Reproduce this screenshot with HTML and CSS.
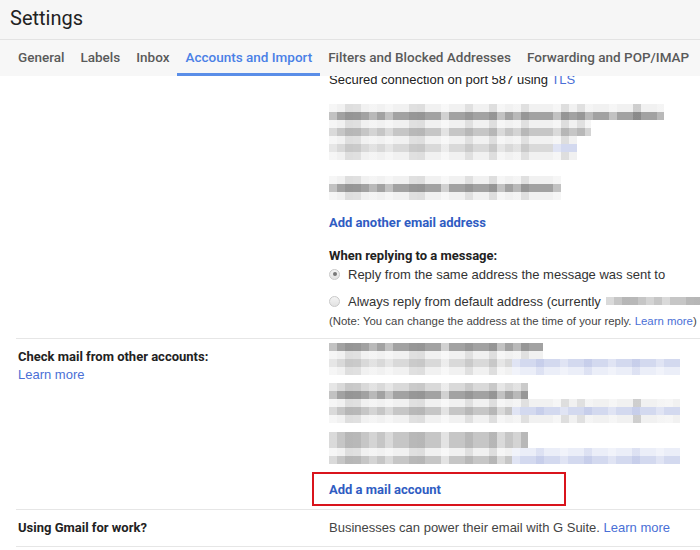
FILE: index.html
```html
<!DOCTYPE html>
<html lang="en">
<head>
  <meta charset="UTF-8">
  <title>Settings</title>
  <link rel="stylesheet" href="styles.css">
</head>
<body>

  <header class="top">
    <h1>Settings</h1>
  </header>

  <nav class="tabs">
    <a class="tab">General</a>
    <a class="tab">Labels</a>
    <a class="tab">Inbox</a>
    <a class="tab active">Accounts and Import</a>
    <a class="tab">Filters and Blocked Addresses</a>
    <a class="tab">Forwarding and POP/IMAP</a>
  </nav>

  <main class="content">

    <!-- send mail as -->
    <section class="row row-first">
      <div class="row-label"></div>
      <div class="row-value">
        <p class="line secured">Secured connection on port 587 using <a class="link">TLS</a></p>

        <div class="mosaic mosaic-a">
          <div class="mos faint w-335"></div>
          <div class="mos dark w-335"></div>
          <div class="mos faint w-262"></div>
          <div class="mos mid w-262"></div>
          <div class="mos faint w-248"></div>
          <div class="mos light w-248"><span class="mos-link short"></span></div>
          <div class="mos faint w-248"></div>
        </div>

        <div class="mosaic mosaic-b">
          <div class="mos faint w-232"></div>
          <div class="mos dark w-232"></div>
          <div class="mos faint w-232"></div>
        </div>

        <p class="line action-line"><a class="action">Add another email address</a></p>

        <div class="reply">
          <div class="reply-title">When replying to a message:</div>
          <div class="radio-row">
            <span class="radio checked"></span>
            <span>Reply from the same address the message was sent to</span>
          </div>
          <div class="radio-row second">
            <span class="radio"></span>
            <span>Always reply from default address (currently</span>
            <span class="mos mid inline-blur"></span>
          </div>
          <div class="note">(Note: You can change the address at the time of your reply. <a class="link">Learn more</a>)</div>
        </div>
      </div>
    </section>

    <!-- check mail from other accounts -->
    <section class="row row-check">
      <div class="row-label">
        <div class="label-title">Check mail from other accounts:</div>
        <a class="link learn">Learn more</a>
      </div>
      <div class="row-value">
        <div class="mosaic mosaic-c">
          <div class="mos dark w-214"></div>
          <div class="mos faint w-214"></div>
          <div class="mos light w-351"><span class="mos-link"></span></div>
          <div class="mos faint w-351"><span class="mos-link pale"></span></div>
        </div>
        <div class="mosaic mosaic-d">
          <div class="mos light w-199"></div>
          <div class="mos dark w-199"></div>
          <div class="mos faint w-351"></div>
          <div class="mos mid w-351"><span class="mos-link"></span></div>
          <div class="mos faint w-351"></div>
        </div>
        <div class="mosaic mosaic-e">
          <div class="mos mid w-199"></div>
          <div class="mos mid w-199"></div>
          <div class="mos faint w-351"><span class="mos-link pale"></span></div>
          <div class="mos mid w-351"><span class="mos-link"></span></div>
        </div>

        <div class="highlight">
          <a class="action">Add a mail account</a>
        </div>
      </div>
    </section>

    <!-- g suite -->
    <section class="row row-work">
      <div class="row-label">
        <div class="label-title">Using Gmail for work?</div>
      </div>
      <div class="row-value">
        <p class="line muted">Businesses can power their email with G Suite. <a class="link">Learn more</a></p>
      </div>
    </section>

  </main>

</body>
</html>
```

FILE: styles.css
```css
body {
  margin: 0;
  width: 700px;
  height: 550px;
  overflow: hidden;
  background: #fff;
  font-family: "Liberation Sans", Arial, sans-serif;
  font-size: 13px;
  color: #222;
}

p {
  margin: 0;
}

a {
  text-decoration: none;
}

/* header */

.top {
  height: 39px;
  background: #f6f6f6;
  border-bottom: 1px solid #e3e3e3;
}

.top h1 {
  margin: 0;
  padding: 5px 0 0 10px;
  font-family: Roboto, "Noto Sans", sans-serif;
  font-weight: 400;
  font-size: 20px;
  line-height: 26px;
  color: #222;
}

.tabs {
  display: flex;
  height: 36px;
  padding-left: 10px;
  background: #f7f7f7;
  position: relative;
  z-index: 1;
  white-space: nowrap;
}

.tab {
  display: flex;
  align-items: center;
  padding: 1px 8px 0;
  font-family: Roboto, "Noto Sans", sans-serif;
  font-weight: 500;
  font-size: 13.5px;
  color: #5a5a5a;
  border-bottom: 3px solid transparent;
}

.tab.active {
  color: #4a80e6;
  border-bottom-color: #5a8ee8;
  border-radius: 3px 3px 0 0;
}

/* rows */

.content {
  overflow: hidden;
}

.row {
  display: flex;
  margin-left: 16px;
  border-top: 1px solid #e6e6e6;
}

.row-first {
  border-top: none;
  padding-bottom: 10px;
}

.row-label {
  width: 311px;
  flex-shrink: 0;
  padding-left: 2px;
  line-height: 16px;
}

.label-title {
  font-family: Roboto, "Liberation Sans", sans-serif;
  font-weight: bold;
  color: #222;
}

.row-value {
  flex: 1;
  white-space: nowrap;
}

.line {
  line-height: 16px;
}

.secured {
  margin-top: -4px;
}

.link {
  color: #4a6fd6;
}

.learn {
  display: block;
  margin-top: 2px;
}

.action {
  font-family: Roboto, "Liberation Sans", sans-serif;
  color: #2f5cc2;
  font-weight: bold;
}

.action-line {
  margin-top: 15px;
}

.muted {
  color: #444;
}

/* reply options */

.reply {
  margin-top: 17px;
}

.reply-title {
  font-family: Roboto, "Liberation Sans", sans-serif;
  font-weight: bold;
  line-height: 16px;
  margin-bottom: 2px;
}

.radio-row {
  display: flex;
  align-items: center;
  height: 16px;
  color: #333;
}

.radio-row.second {
  margin-top: 11px;
}

.radio {
  box-sizing: border-box;
  width: 11px;
  height: 11px;
  margin: 0 8px 0 0;
  border: 1px solid #c9c9c9;
  border-radius: 50%;
  background: linear-gradient(#f4f4f4, #e2e2e2);
  position: relative;
}

.radio.checked::after {
  content: "";
  position: absolute;
  left: 2.5px;
  top: 2.5px;
  width: 4px;
  height: 4px;
  border-radius: 50%;
  background: #777;
}

.inline-blur {
  width: 100px;
  height: 12px;
  margin-left: 5px;
}

.note {
  margin-top: 5px;
  font-size: 11.4px;
  line-height: 14px;
  color: #444;
}

/* pixelated addresses */

.mosaic-a {
  margin-top: 16px;
}

.mosaic-b {
  margin-top: 16px;
}

.mosaic-c {
  margin-top: 4px;
}

.mosaic-d {
  margin-top: 8px;
}

.mosaic-e {
  margin-top: 9px;
}

.mos {
  display: flex;
  justify-content: flex-end;
  height: 8px;
  background-image:
    repeating-linear-gradient(90deg, rgba(255,255,255,0.35) 0 8px, transparent 8px 24px, rgba(0,0,0,0.07) 24px 32px, transparent 32px 56px),
    repeating-linear-gradient(90deg, transparent 0 16px, rgba(0,0,0,0.08) 16px 24px, transparent 24px 40px, rgba(255,255,255,0.25) 40px 48px, transparent 48px 72px);
}

.mos.faint { background-color: #f1f1f1; }
.mos.light { background-color: #d9d9d9; }
.mos.mid { background-color: #c6c6c6; }
.mos.dark { background-color: #a2a2a2; }

.mos-link {
  width: 168px;
  height: 100%;
  background-color: #d3d9ef;
  background-image: repeating-linear-gradient(90deg, rgba(255,255,255,0.3) 0 8px, transparent 8px 24px, rgba(60,80,180,0.08) 24px 32px, transparent 32px 48px);
}

.mos-link.short {
  width: 24px;
}

.mos-link.pale {
  background-color: #ebeef8;
}

.w-335 { width: 335px; }
.w-262 { width: 262px; }
.w-248 { width: 248px; }
.w-232 { width: 232px; }
.w-214 { width: 214px; }
.w-199 { width: 199px; }
.w-351 { width: 351px; }

/* boxed link */

.highlight {
  width: 235px;
  margin: 8px 0 3px -17px;
  padding: 8px 0 6px 15px;
  border: 2px solid #d9141c;
  line-height: 16px;
}

.row-check .row-label {
  padding-top: 10px;
}

.row-work {
  padding: 10px 0 10px;
  border-bottom: 1px solid #e6e6e6;
}
```
